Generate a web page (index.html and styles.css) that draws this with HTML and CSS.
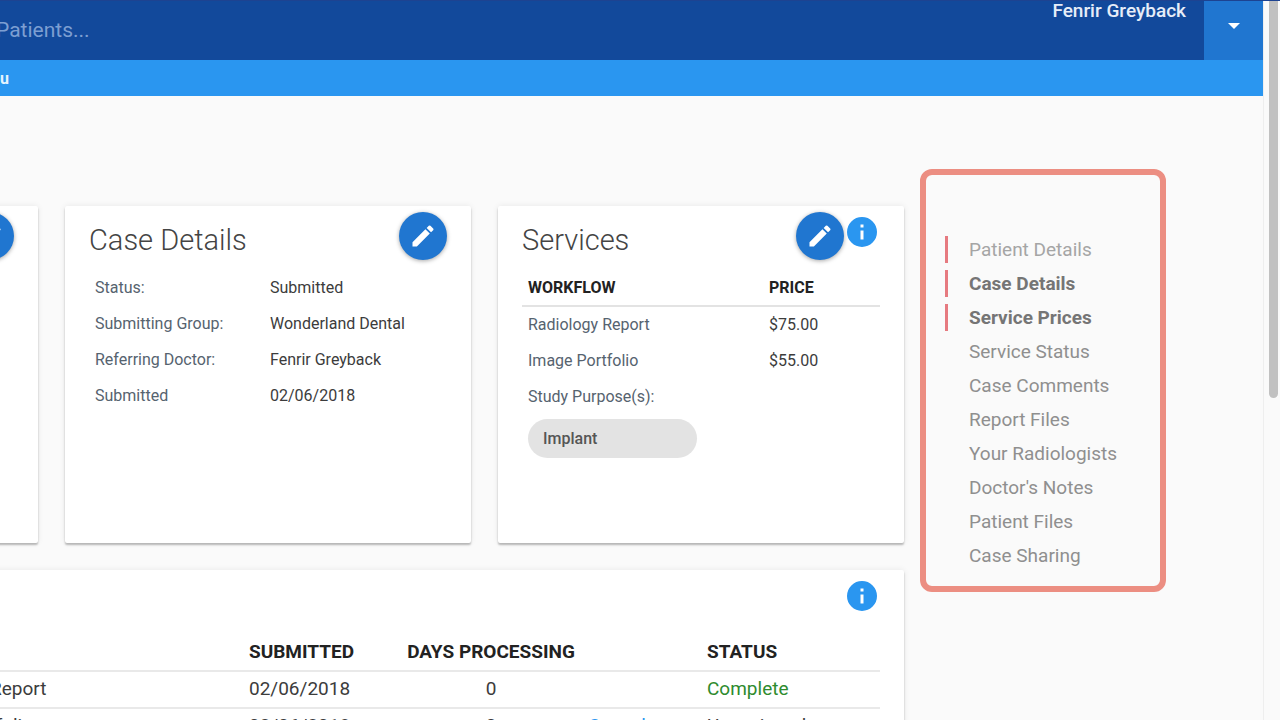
FILE: index.html
```
<!DOCTYPE html>
<html lang="en">
<head>
    <meta charset="UTF-8">
    <meta name="viewport" content="width=device-width, initial-scale=1.0">
    <title>Case Details</title>
    <link rel="stylesheet" href="styles.css">
</head>
<body>
    <svg class="sprite" aria-hidden="true">
        <symbol id="icon-edit" viewBox="0 0 24 24">
            <path d="M3 17.25V21h3.75L17.81 9.94l-3.75-3.75L3 17.25zM20.71 7.04a1 1 0 0 0 0-1.41l-2.34-2.34a1 1 0 0 0-1.41 0l-1.83 1.83 3.75 3.75 1.83-1.83z"/>
        </symbol>
        <symbol id="icon-info" viewBox="0 0 24 24">
            <path d="M12 2a10 10 0 1 0 0 20 10 10 0 0 0 0-20zm1 15h-2v-6h2v6zm0-8h-2V7h2v2z"/>
        </symbol>
    </svg>

    <div class="window">
        <div class="page">
            <header class="topbar">
                <input type="search" class="search" placeholder="Patients..." aria-label="Search patients">
                <span class="user-name">Fenrir Greyback</span>
                <button type="button" class="user-menu" aria-label="Account menu">
                    <svg viewBox="0 0 12 6" width="12" height="6"><path d="M0 0h12L6 6z"/></svg>
                </button>
            </header>
            <div class="subbar"><a href="#" class="subbar-link">ou</a></div>

            <div class="layout">
                <main class="content">
                    <div class="cards">
                        <section class="card" id="patient">
                            <div class="card-header">
                                <button type="button" class="btn-edit" aria-label="Edit patient"><svg><use href="#icon-edit"/></svg></button>
                            </div>
                        </section>

                        <section class="card" id="case">
                            <div class="card-header">
                                <h2 class="card-title">Case Details</h2>
                                <button type="button" class="btn-edit" aria-label="Edit case"><svg><use href="#icon-edit"/></svg></button>
                            </div>
                            <dl class="details">
                                <dt>Status:</dt>
                                <dd>Submitted</dd>
                                <dt>Submitting Group:</dt>
                                <dd>Wonderland Dental</dd>
                                <dt>Referring Doctor:</dt>
                                <dd>Fenrir Greyback</dd>
                                <dt>Submitted</dt>
                                <dd>02/06/2018</dd>
                            </dl>
                        </section>

                        <section class="card" id="prices">
                            <div class="card-header">
                                <h2 class="card-title">Services</h2>
                                <button type="button" class="btn-edit" aria-label="Edit services"><svg><use href="#icon-edit"/></svg></button>
                                <button type="button" class="btn-info" aria-label="About services"><svg><use href="#icon-info"/></svg></button>
                            </div>
                            <table class="table prices">
                                <thead>
                                    <tr><th>WORKFLOW</th><th class="col-price">PRICE</th></tr>
                                </thead>
                                <tbody>
                                    <tr><td class="muted">Radiology Report</td><td>$75.00</td></tr>
                                    <tr><td class="muted">Image Portfolio</td><td>$55.00</td></tr>
                                </tbody>
                            </table>
                            <div class="purpose">
                                <p class="muted">Study Purpose(s):</p>
                                <span class="chip">Implant</span>
                            </div>
                        </section>
                    </div>

                    <section class="card" id="status">
                        <div class="card-header">
                            <button type="button" class="btn-info" aria-label="About service status"><svg><use href="#icon-info"/></svg></button>
                        </div>
                        <table class="table status">
                            <colgroup>
                                <col>
                                <col class="col-service">
                                <col class="col-submitted">
                                <col class="col-days">
                                <col class="col-action">
                                <col class="col-status">
                            </colgroup>
                            <thead>
                                <tr>
                                    <th></th>
                                    <th></th>
                                    <th>SUBMITTED</th>
                                    <th class="center">DAYS PROCESSING</th>
                                    <th></th>
                                    <th>STATUS</th>
                                </tr>
                            </thead>
                            <tbody>
                                <tr>
                                    <td></td>
                                    <td>Radiology Report</td>
                                    <td>02/06/2018</td>
                                    <td class="center">0</td>
                                    <td></td>
                                    <td class="complete">Complete</td>
                                </tr>
                                <tr>
                                    <td></td>
                                    <td>Image Portfolio</td>
                                    <td>02/06/2018</td>
                                    <td class="center">0</td>
                                    <td><a href="#">Cancel</a></td>
                                    <td>Unassigned</td>
                                </tr>
                            </tbody>
                        </table>
                    </section>
                </main>

                <nav class="toc" aria-label="Sections">
                    <ul>
                        <li class="marked visited"><a href="#patient">Patient Details</a></li>
                        <li class="marked active"><a href="#case">Case Details</a></li>
                        <li class="marked active"><a href="#prices">Service Prices</a></li>
                        <li><a href="#status">Service Status</a></li>
                        <li><a href="#comments">Case Comments</a></li>
                        <li><a href="#reports">Report Files</a></li>
                        <li><a href="#radiologists">Your Radiologists</a></li>
                        <li><a href="#notes">Doctor's Notes</a></li>
                        <li><a href="#files">Patient Files</a></li>
                        <li><a href="#sharing">Case Sharing</a></li>
                    </ul>
                </nav>
            </div>
        </div>
        <div class="scrollbar"><div class="thumb"></div></div>
    </div>
</body>
</html>
```
FILE: styles.css
```
* {
    margin: 0;
    padding: 0;
    box-sizing: border-box;
}

body {
    font-family: Roboto, 'Liberation Sans', sans-serif;
    font-size: 16px;
    color: #3c3c3c;
    background: #fafafa;
    overflow: hidden;
}

a {
    color: #2a96f0;
    text-decoration: none;
}

button {
    border: none;
    background: none;
    cursor: pointer;
}

.sprite {
    display: none;
}

.window {
    display: flex;
    height: 100vh;
    overflow: hidden;
    border-top: 1px solid #1d4391;
}

.page {
    flex: 1;
    min-width: 0;
}

/* header */

.topbar {
    display: flex;
    align-items: flex-start;
    height: 59px;
    background: #12499b;
}

.search {
    flex: 1;
    align-self: stretch;
    margin-left: -4px;
    padding-bottom: 2px;
    border: none;
    outline: none;
    background: none;
    color: #fff;
    font-family: inherit;
    font-size: 21px;
}

.search::placeholder {
    color: #7d9fd2;
}

.user-name {
    margin-right: 18px;
    color: #e6edf8;
    font-size: 19px;
    font-weight: 500;
    line-height: 20px;
}

.user-menu {
    width: 59px;
    height: 59px;
    padding-bottom: 13px;
    background: #2076d0;
    fill: #fff;
}

.subbar {
    display: flex;
    align-items: center;
    height: 36px;
    background: #2a96f0;
}

.subbar-link {
    margin-left: -9px;
    color: #e6f3fe;
    font-weight: 700;
}

/* content */

.layout {
    display: flex;
    align-items: flex-start;
}

.content {
    flex: 1;
    margin: 110px 16px 0 -368px;
}

.cards {
    display: grid;
    grid-template-columns: repeat(3, 1fr);
    gap: 27px;
    margin-bottom: 27px;
}

.card {
    min-height: 337px;
    padding: 0 24px;
    border-radius: 2px;
    background: #fff;
    box-shadow: 0 2px 2px rgba(0, 0, 0, 0.25), 0 0 6px rgba(0, 0, 0, 0.08);
}

.card-header {
    display: flex;
    justify-content: flex-end;
    align-items: flex-start;
    height: 63px;
}

.card-title {
    flex: 1;
    color: #444;
    font-size: 29px;
    font-weight: 300;
    line-height: 68px;
}

.btn-edit {
    width: 48px;
    height: 48px;
    margin-top: 6px;
    padding: 10px;
    border-radius: 50%;
    background: #2076d0;
    fill: #fff;
    box-shadow: 0 1px 4px rgba(0, 0, 0, 0.35);
}

.btn-edit svg {
    display: block;
    width: 28px;
    height: 28px;
}

.btn-info {
    width: 36px;
    height: 36px;
    margin-top: 8px;
    fill: #2a96f0;
}

.btn-info svg {
    display: block;
    width: 36px;
    height: 36px;
}

.details {
    display: grid;
    grid-template-columns: 175px 1fr;
    padding: 1px 6px 0;
    line-height: 36px;
}

.details dt,
.muted {
    color: #56636f;
}

.table {
    width: 100%;
    border-collapse: collapse;
    table-layout: fixed;
}

.table th,
.table td {
    height: 36px;
    padding: 0 6px;
    text-align: left;
}

.table th {
    color: #222;
    font-weight: 700;
}

.table .center {
    text-align: center;
}

.prices th {
    height: 37px;
    border-bottom: 2px solid #e3e3e3;
}

.col-price {
    width: 117px;
}

.purpose {
    padding: 1px 6px 0;
    line-height: 36px;
}

.chip {
    display: block;
    width: 169px;
    margin-top: 4px;
    padding: 0 15px;
    border-radius: 20px;
    background: #e3e3e3;
    color: #555;
    font-weight: 500;
    line-height: 39px;
}

.status {
    font-size: 19px;
}

.status th {
    height: 38px;
    border-bottom: 2px solid #e9e9e9;
}

.status td {
    height: 37px;
    padding-bottom: 2px;
    border-bottom: 2px solid #e9e9e9;
}

.status .complete {
    color: #2e8b2e;
}

.col-service {
    width: 347px;
}

.col-submitted {
    width: 157px;
}

.col-days {
    width: 182px;
}

.col-action {
    width: 119px;
}

.col-status {
    width: 179px;
}

/* section list */

.toc {
    width: 246px;
    margin: 73px 97px 0 0;
    padding: 61px 0 17px 19px;
    border: 6px solid #ec8e82;
    border-radius: 12px;
    font-size: 19px;
    line-height: 27px;
}

.toc ul {
    display: flex;
    flex-direction: column;
    gap: 7px;
    list-style: none;
}

.toc li {
    padding-left: 21px;
    border-left: 3px solid transparent;
}

.toc .marked {
    border-left-color: #e67a80;
}

.toc a {
    color: #8f8f8f;
}

.toc .visited a {
    color: #a5a5a5;
}

.toc .active a {
    color: #757575;
    font-weight: 700;
}

/* scrollbar */

.scrollbar {
    width: 17px;
    padding: 0 2px 0 5px;
    border-left: 1px solid #eee;
    background: #fafafa;
}

.thumb {
    height: 397px;
    border-radius: 0 0 5px 5px;
    background: #c1c1c1;
}
```
